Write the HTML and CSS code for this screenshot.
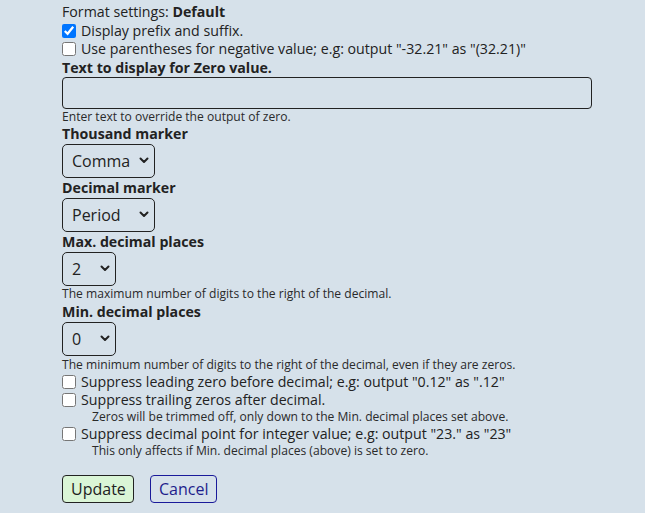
FILE: index.html
```html
<!DOCTYPE html>
<html>
<head>
<meta charset="utf-8">
<link rel="stylesheet" href="styles.css">
</head>
<body>
<div class="form">
  <div class="line">Format settings: <b>Default</b></div>
  <label class="check"><input type="checkbox" checked> <span>Display prefix and suffix.</span></label>
  <label class="check"><input type="checkbox"> <span>Use parentheses for negative value; e.g: output "-32.21" as "(32.21)"</span></label>

  <div class="field-label">Text to display for Zero value.</div>
  <input class="text-input" type="text">
  <div class="help tight">Enter text to override the output of zero.</div>

  <div class="field-label">Thousand marker</div>
  <div class="select-wrap wide">
    <select class="sel"><option>Comma</option></select>
    <svg class="chev" width="10" height="7" viewBox="0 0 10 7"><path d="M1.5 1.5 L5 5 L8.5 1.5" fill="none" stroke="#222" stroke-width="2" stroke-linecap="round" stroke-linejoin="round"/></svg>
  </div>

  <div class="field-label">Decimal marker</div>
  <div class="select-wrap wide">
    <select class="sel"><option>Period</option></select>
    <svg class="chev" width="10" height="7" viewBox="0 0 10 7"><path d="M1.5 1.5 L5 5 L8.5 1.5" fill="none" stroke="#222" stroke-width="2" stroke-linecap="round" stroke-linejoin="round"/></svg>
  </div>

  <div class="field-label">Max. decimal places</div>
  <div class="select-wrap narrow">
    <select class="sel"><option>2</option></select>
    <svg class="chev" width="10" height="7" viewBox="0 0 10 7"><path d="M1.5 1.5 L5 5 L8.5 1.5" fill="none" stroke="#222" stroke-width="2" stroke-linecap="round" stroke-linejoin="round"/></svg>
  </div>
  <div class="help">The maximum number of digits to the right of the decimal.</div>

  <div class="field-label">Min. decimal places</div>
  <div class="select-wrap narrow">
    <select class="sel"><option>0</option></select>
    <svg class="chev" width="10" height="7" viewBox="0 0 10 7"><path d="M1.5 1.5 L5 5 L8.5 1.5" fill="none" stroke="#222" stroke-width="2" stroke-linecap="round" stroke-linejoin="round"/></svg>
  </div>
  <div class="help loose">The minimum number of digits to the right of the decimal, even if they are zeros.</div>

  <label class="check"><input type="checkbox"> <span>Suppress leading zero before decimal; e.g: output "0.12" as ".12"</span></label>
  <label class="check"><input type="checkbox"> <span>Suppress trailing zeros after decimal.</span></label>
  <div class="help indent">Zeros will be trimmed off, only down to the Min. decimal places set above.</div>
  <label class="check"><input type="checkbox"> <span>Suppress decimal point for integer value; e.g: output "23." as "23"</span></label>
  <div class="help indent">This only affects if Min. decimal places (above) is set to zero.</div>

  <div class="buttons">
    <button class="btn update">Update</button>
    <button class="btn cancel">Cancel</button>
  </div>
</div>
</body>
</html>
```
FILE: styles.css
```css
html, body {
  margin: 0;
  padding: 0;
  background: #d6e1ea;
}
body {
  font-family: "Open Sans", "DejaVu Sans", sans-serif;
  color: #222;
  font-size: 14.2px;
}
.form {
  padding: 3px 0 0 62px;
  display: flex;
  flex-direction: column;
  align-items: flex-start;
}
.line {
  line-height: 18px;
  height: 19px;
}
.check {
  display: flex;
  align-items: center;
  height: 18px;
  line-height: 18px;
}
.check input {
  margin: 0 5px 0 0;
  width: 14px;
  height: 14px;
}
.field-label {
  font-weight: bold;
  line-height: 19px;
}
.text-input {
  box-sizing: border-box;
  width: 530px;
  height: 32px;
  border: 1px solid #222;
  border-radius: 4px;
  background: transparent;
  margin: 0;
}
.help {
  font-size: 12.1px;
  line-height: 16px;
  color: #2a2a2a;
}
.help.tight { line-height: 15px; }
.help.loose { line-height: 17px; }
.help.indent {
  padding-left: 30px;
}
.select-wrap {
  position: relative;
  margin-top: 1px;
}
.sel {
  appearance: none;
  -webkit-appearance: none;
  box-sizing: border-box;
  height: 34px;
  border: 1px solid #222;
  border-radius: 5px;
  background: transparent;
  font-family: "Open Sans", sans-serif;
  font-size: 16px;
  color: #222;
  padding: 0 0 0 9px;
  margin: 0;
}
.wide .sel { width: 93px; }
.narrow .sel { width: 54px; }
.chev {
  position: absolute;
  right: 6px;
  top: 13px;
  pointer-events: none;
}
.buttons {
  display: flex;
  gap: 16px;
  margin-top: 16px;
}
.btn {
  box-sizing: border-box;
  height: 28px;
  font-family: "Open Sans", sans-serif;
  font-size: 16px;
  border-radius: 4px;
  padding: 0 8px;
  margin: 0;
}
.update {
  width: 72px;
  background: #daf5d6;
  border: 1px solid #222;
  color: #222;
}
.cancel {
  width: 67px;
  background: transparent;
  border: 1px solid #1a1a9a;
  color: #1e1e8c;
}
```
